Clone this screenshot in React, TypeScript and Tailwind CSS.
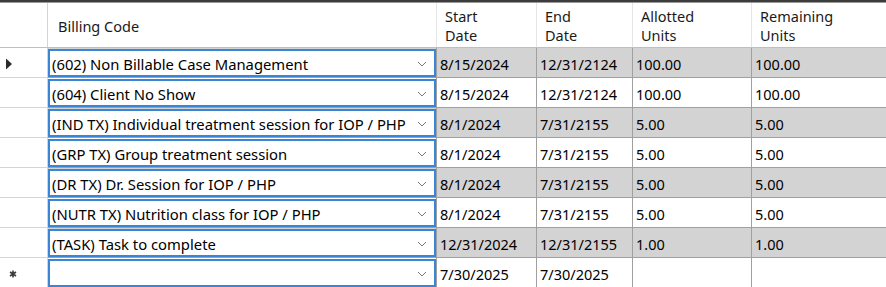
import React from "react";

type Row = { code: string; start: string; end: string; allotted: string; remaining: string };

const rows: Row[] = [
  { code: "(602) Non Billable Case Management", start: "8/15/2024", end: "12/31/2124", allotted: "100.00", remaining: "100.00" },
  { code: "(604) Client No Show", start: "8/15/2024", end: "12/31/2124", allotted: "100.00", remaining: "100.00" },
  { code: "(IND TX) Individual treatment session for IOP / PHP", start: "8/1/2024", end: "7/31/2155", allotted: "5.00", remaining: "5.00" },
  { code: "(GRP TX) Group treatment session", start: "8/1/2024", end: "7/31/2155", allotted: "5.00", remaining: "5.00" },
  { code: "(DR TX) Dr. Session for IOP / PHP", start: "8/1/2024", end: "7/31/2155", allotted: "5.00", remaining: "5.00" },
  { code: "(NUTR TX) Nutrition class for IOP / PHP", start: "8/1/2024", end: "7/31/2155", allotted: "5.00", remaining: "5.00" },
  { code: "(TASK) Task to complete", start: "12/31/2024", end: "12/31/2155", allotted: "1.00", remaining: "1.00" },
  { code: "", start: "7/30/2025", end: "7/30/2025", allotted: "", remaining: "" },
];

function Chevron() {
  return (
    <svg width="10" height="6" viewBox="0 0 10 6" className="shrink-0 mt-[2px]">
      <path d="M1 1 L5 5 L9 1" fill="none" stroke="#7a7a7a" strokeWidth="1" />
    </svg>
  );
}

function Combo({ text }: { text: string }) {
  return (
    <div className="mt-[1px] h-[28px] flex items-center border-2 border-[#3a86d4] bg-white pl-[2px] pr-[7px]">
      <span className="flex-1 truncate pt-[3px] text-[14.8px]">{text}</span>
      <Chevron />
    </div>
  );
}

export default function App() {
  return (
    <div
      className="w-[886px] h-[287px] overflow-hidden bg-white text-[14.5px] text-black"
      style={{ fontFamily: '"Noto Sans", sans-serif' }}
    >
      <div className="h-[2px] bg-[#3c3c3c]" />
      <div className="h-[1px] bg-[#9a9a9a]" />
      {/* header */}
      <div className="flex h-[45px] border-b border-[#bfbfbf] text-[#1a1a1a] leading-[18.5px]">
        <div className="w-[48px] shrink-0 border-r border-[#d4d4d4]" />
        <div className="w-[389px] shrink-0 border-r border-[#e4e4e4] flex items-center pl-[10px] pt-[3px]">Billing Code</div>
        <div className="w-[100px] shrink-0 border-r border-[#e4e4e4] flex items-center pl-[8px] pt-[1px]">
          <div>Start<br />Date</div>
        </div>
        <div className="w-[96px] shrink-0 border-r border-[#e4e4e4] flex items-center pl-[8px] pt-[1px]">
          <div>End<br />Date</div>
        </div>
        <div className="w-[119px] shrink-0 border-r border-[#e4e4e4] flex items-center pl-[8px] pt-[1px]">
          <div>Allotted<br />Units</div>
        </div>
        <div className="flex-1 flex items-center pl-[8px] pt-[1px]">
          <div>Remaining<br />Units</div>
        </div>
      </div>
      {rows.map((r, i) => {
        const gray = i % 2 === 0 && i < 7;
        const bg = gray ? "bg-[#d3d3d3]" : "bg-white";
        const isNew = i === 7;
        return (
          <div key={i} className="flex h-[30px]">
            <div className="w-[48px] shrink-0 border-r border-b border-[#d4d4d4] bg-white flex items-center justify-start">
              {i === 0 && (
                <svg width="14" height="14" viewBox="0 0 14 14" className="ml-[5px] mt-[3px]">
                  <path d="M1 1.5 L7 7 L1 12.5 Z" fill="#2b2b2b" />
                </svg>
              )}
              {isNew && (
                <svg width="10" height="10" viewBox="0 0 10 10" className="ml-[8px] mt-[3px]">
                  <path d="M5 1.5 V8.5 M2 3 L8 7 M8 3 L2 7" stroke="#3a3a3a" strokeWidth="1.6" />
                </svg>
              )}
            </div>
            <div className={`w-[389px] shrink-0 border-r border-b border-[#a0a0a0] ${bg}`}>
              <Combo text={r.code} />
            </div>
            <div className={`w-[100px] shrink-0 border-r border-b border-[#a0a0a0] ${bg} flex items-center pl-[3px] pt-[5px]`}>{r.start}</div>
            <div className={`w-[96px] shrink-0 border-r border-b border-[#a0a0a0] ${bg} flex items-center pl-[3px] pt-[5px]`}>{r.end}</div>
            <div className={`w-[119px] shrink-0 border-r border-b border-[#a0a0a0] ${bg} flex items-center pl-[3px] pt-[5px]`}>{r.allotted}</div>
            <div className={`flex-1 border-b border-[#a0a0a0] ${bg} flex items-center pl-[3px] pt-[5px]`}>{r.remaining}</div>
          </div>
        );
      })}
    </div>
  );
}
